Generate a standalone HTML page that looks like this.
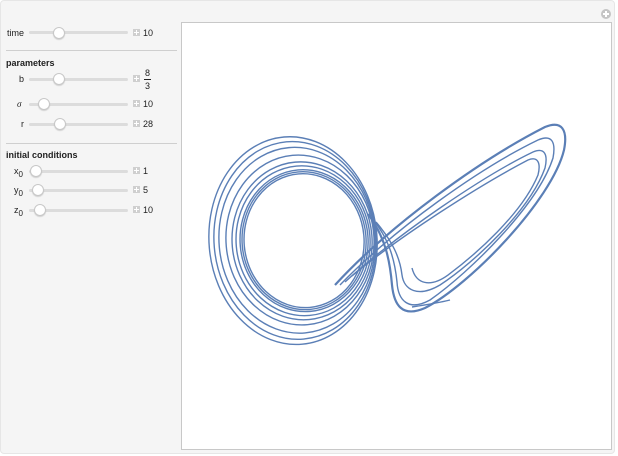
<!DOCTYPE html>
<html><head><style>
*{margin:0;padding:0;box-sizing:border-box}
body{width:618px;height:456px;background:#fff;font-family:"Liberation Sans",sans-serif;font-size:9px;color:#222;position:relative;overflow:hidden}
#panel{position:absolute;left:0;top:0;width:615px;height:454px;background:#f5f5f5;border:1px solid #e6e6e6;border-radius:4px}
.t{position:absolute;font-size:9px;line-height:10px}
.b{font-weight:bold}
.track{position:absolute;height:3px;background:#dcdcdc;border-radius:2px;width:99px;left:29px}
.thumb{position:absolute;width:12px;height:12px;border-radius:50%;background:#fff;border:1px solid #c8c8c8;box-shadow:0 1px 1px rgba(0,0,0,.15)}
.plus{position:absolute;width:7px;height:7px;background:#cfcfcf;left:133px}
.plus:before{content:"";position:absolute;left:3px;top:1px;width:1px;height:5px;background:#fff}
.plus:after{content:"";position:absolute;left:1px;top:3px;width:5px;height:1px;background:#fff}
.sep{position:absolute;left:6px;width:171px;height:1px;background:#cfcfcf}
#plot{position:absolute;left:181px;top:22px;width:431px;height:428px;background:#fff;border:1px solid #c8c8c8}
</style></head><body>
<div id="panel"></div>
<div style="position:absolute;left:601px;top:9px;width:10px;height:10px;border-radius:50%;background:#c4c4c4"></div>
<div style="position:absolute;left:605px;top:11px;width:2px;height:6px;background:#fff"></div>
<div style="position:absolute;left:603px;top:13px;width:6px;height:2px;background:#fff"></div>

<div class="t" style="left:7px;top:28px">time</div>
<div class="track" style="top:31px"></div><div class="thumb" style="left:53px;top:27px"></div>
<div class="plus" style="top:29px"></div><div class="t" style="left:143px;top:28px">10</div>
<div class="sep" style="top:50px"></div>

<div class="t b" style="left:6px;top:58px">parameters</div>
<div class="t" style="left:19px;top:74px">b</div>
<div class="track" style="top:78px"></div><div class="thumb" style="left:53px;top:73px"></div>
<div class="plus" style="top:75px"></div>
<div class="t" style="left:145px;top:68px">8</div>
<div style="position:absolute;left:144px;top:79px;width:7px;height:1px;background:#222"></div>
<div class="t" style="left:145px;top:81px">3</div>
<div class="t" style="left:17px;top:99px;font-style:italic;font-family:'Liberation Serif',serif">σ</div>
<div class="track" style="top:103px"></div><div class="thumb" style="left:38px;top:98px"></div>
<div class="plus" style="top:100px"></div><div class="t" style="left:143px;top:99px">10</div>
<div class="t" style="left:21px;top:119px">r</div>
<div class="track" style="top:123px"></div><div class="thumb" style="left:54px;top:118px"></div>
<div class="plus" style="top:120px"></div><div class="t" style="left:143px;top:119px">28</div>
<div class="sep" style="top:143px"></div>

<div class="t b" style="left:6px;top:150px">initial conditions</div>
<div class="t" style="left:14px;top:166px">x<sub style="font-size:8px;vertical-align:-3px">0</sub></div>
<div class="track" style="top:170px"></div><div class="thumb" style="left:30px;top:165px"></div>
<div class="plus" style="top:167px"></div><div class="t" style="left:143px;top:166px">1</div>
<div class="t" style="left:14px;top:185px">y<sub style="font-size:8px;vertical-align:-3px">0</sub></div>
<div class="track" style="top:189px"></div><div class="thumb" style="left:32px;top:184px"></div>
<div class="plus" style="top:186px"></div><div class="t" style="left:143px;top:185px">5</div>
<div class="t" style="left:14px;top:205px">z<sub style="font-size:8px;vertical-align:-3px">0</sub></div>
<div class="track" style="top:209px"></div><div class="thumb" style="left:34px;top:204px"></div>
<div class="plus" style="top:206px"></div><div class="t" style="left:143px;top:205px">10</div>

<div id="plot"></div>
<svg style="position:absolute;left:0;top:0" width="618" height="456" fill="none" stroke="#5b7fb6" stroke-width="1.4">
<g transform="rotate(-5 300 240)">
<ellipse cx="304" cy="241" rx="60" ry="67"/>
<ellipse cx="304" cy="241" rx="62" ry="69"/>
<ellipse cx="304" cy="241" rx="64" ry="71"/>
<ellipse cx="303" cy="241" rx="67" ry="75"/>
<ellipse cx="302" cy="241" rx="70" ry="79"/>
<ellipse cx="300" cy="240" rx="74" ry="85"/>
<ellipse cx="297" cy="240" rx="78" ry="93"/>
<ellipse cx="295" cy="240" rx="81" ry="99"/>
<ellipse cx="293" cy="240" rx="84" ry="104"/>
</g>
<path stroke-width="2.2" d="M335 285 C390 225 480 160 545 127 C562 120 568 130 564 150 C552 200 470 285 425 308 C402 318 394 305 392 285 C390 262 386 238 368 214"/>
<path d="M340 285 C395 228 480 168 538 140 C552 134 556 142 553 158 C538 205 470 272 430 300 C408 312 398 300 397 282 C395 262 390 240 372 218"/>
<path d="M345 282 C400 232 485 175 533 152 C545 147 548 155 545 168 C530 210 475 262 440 285 C418 298 404 290 402 275 C400 258 393 242 376 222"/>
<path d="M352 276 C400 236 480 185 528 160 C538 156 541 163 538 175 C522 214 475 255 448 275 C430 288 416 284 412 268"/>
<path d="M412 307 C425 305 438 303 450 300"/>
</svg>
</body></html>
